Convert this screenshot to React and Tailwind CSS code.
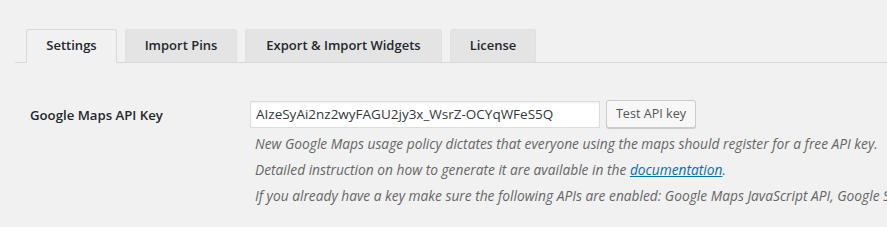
import React from "react";

export default function App() {
  const font = { fontFamily: '"Open Sans", "Noto Sans", sans-serif' };
  return (
    <div className="w-[887px] h-[227px] overflow-hidden bg-[#f1f1f1] text-[#23282d]" style={font}>
      <div className="pl-[15px] pt-[29px]">
        <div className="flex items-end gap-[8px] pl-[11px] border-b border-[#d8d8d8] h-[34px]">
          <div className="h-[34px] w-[91px] -mb-px flex items-center justify-center bg-[#f1f1f1] border border-[#d8d8d8] border-b-[#f1f1f1] rounded-t-[3px] text-[13px] font-semibold">
            Settings
          </div>
          <div className="h-[33px] w-[112px] flex items-center justify-center bg-[#e4e4e4] border border-[#e0e0e0] border-b-0 rounded-t-[3px] text-[13px] font-semibold">
            Import Pins
          </div>
          <div className="h-[33px] w-[197px] flex items-center justify-center bg-[#e4e4e4] border border-[#e0e0e0] border-b-0 rounded-t-[3px] text-[13px] font-semibold">
            Export &amp; Import Widgets
          </div>
          <div className="h-[33px] w-[86px] flex items-center justify-center bg-[#e4e4e4] border border-[#e0e0e0] border-b-0 rounded-t-[3px] text-[13px] font-semibold">
            License
          </div>
        </div>
      </div>
      <div className="flex pt-[37px] pl-[30px]">
        <div className="w-[220px] shrink-0 pt-[5px] text-[13.2px] font-semibold leading-[20px]">Google Maps API Key</div>
        <div className="flex flex-col whitespace-nowrap">
          <div className="flex items-center gap-[6px]">
            <div className="w-[350px] h-[27px] shrink-0 bg-white border border-[#ddd] shadow-[inset_0_1px_2px_rgba(0,0,0,0.07)] flex items-center px-[5px] text-[13.5px] text-[#32373c]">
              AIzeSyAi2nz2wyFAGU2jy3x_WsrZ-OCYqWFeS5Q
            </div>
            <button className="h-[28px] w-[90px] shrink-0 bg-[#f7f7f7] border border-[#ccc] rounded-[3px] shadow-[0_1px_0_#ccc] text-[12.6px] text-[#555] flex items-center justify-center">
              Test API key
            </button>
          </div>
          <div className="pl-[5px] pt-[6px] text-[13.75px] italic text-[#666] leading-[19px] flex flex-col gap-[7px]">
            <p>New Google Maps usage policy dictates that everyone using the maps should register for a free API key.</p>
            <p>
              Detailed instruction on how to generate it are available in the{" "}
              <a href="#" className="text-[#0073aa] underline">documentation</a>.
            </p>
            <p>If you already have a key make sure the following APIs are enabled: Google Maps JavaScript API, Google Static Maps API.</p>
          </div>
        </div>
      </div>
    </div>
  );
}
